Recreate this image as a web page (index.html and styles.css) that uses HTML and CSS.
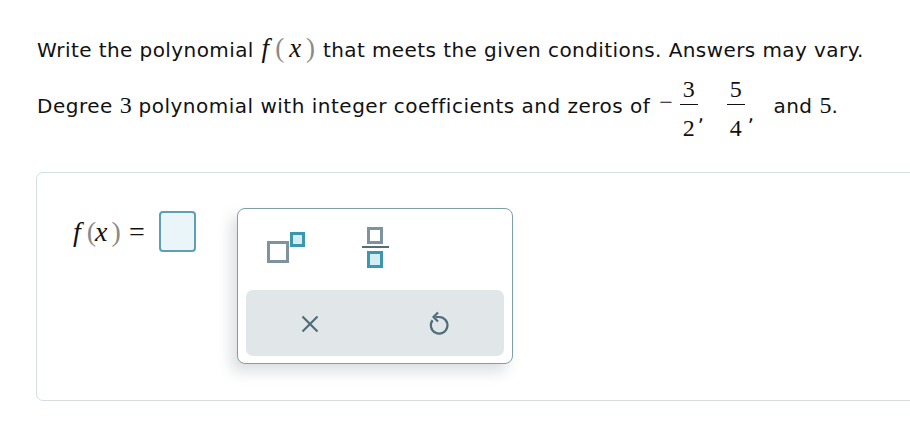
FILE: index.html
```html
<!DOCTYPE html>
<html>
<head>
<meta charset="utf-8">
<link rel="stylesheet" href="styles.css">
</head>
<body>
<div class="page">
  <p class="line1">Write the polynomial <span class="m1 mf">f</span><span class="m1 p1 po">(</span><span class="m1 mx">x</span><span class="m1 p1 pc">)</span> that meets the given conditions. Answers may vary.</p>
  <p class="line2">Degree <span class="mn">3</span> polynomial with integer coefficients and zeros of <span class="minus">−</span><span class="frac"><span class="num">3</span><span class="den">2</span></span><span class="comma">,</span><span class="frac f2"><span class="num">5</span><span class="den">4</span></span><span class="comma c2">,</span> and <span class="mn">5</span>.</p>
  <div class="answer">
    <div class="expr">
      <span class="m2 af">f</span><span class="m2 p2 ao">(</span><span class="m2 ax">x</span><span class="m2 p2 ac">)</span><span class="eq">=</span><span class="box"></span>
    </div>
    <div class="palette">
      <div class="tools">
        <button class="tool sup">
          <svg width="40" height="32" viewBox="0 0 40 32">
            <rect x="1.5" y="10.5" width="19" height="19" fill="#fff" stroke="#7e939c" stroke-width="3"/>
            <rect x="24.5" y="1.5" width="12" height="12" fill="#d3edf4" stroke="#3c97ae" stroke-width="3"/>
          </svg>
        </button>
        <button class="tool fr">
          <svg width="28" height="42" viewBox="0 0 28 42">
            <rect x="6.5" y="1.5" width="13" height="14" fill="#fff" stroke="#7e939c" stroke-width="3"/>
            <rect x="0" y="19" width="27" height="2" fill="#546e78"/>
            <rect x="6.5" y="25.5" width="13" height="14" fill="#d3edf4" stroke="#3c97ae" stroke-width="3"/>
          </svg>
        </button>
      </div>
      <div class="actions">
        <button class="act ax1">
          <svg width="18" height="18" viewBox="0 0 18 18">
            <path d="M1.5 1.5 L16.5 16.5 M16.5 1.5 L1.5 16.5" stroke="#4e6d79" stroke-width="2.2" fill="none"/>
          </svg>
        </button>
        <button class="act ax2">
          <svg width="22" height="26" viewBox="0 0 22 26">
            <path d="M4.6 10.2 A8.3 8.3 0 1 0 11 7 L7.5 7" stroke="#4e6d79" stroke-width="2.2" fill="none"/>
            <path d="M10 2.5 L5.5 7 L10 11.5" stroke="#4e6d79" stroke-width="2.2" fill="none"/>
          </svg>
        </button>
      </div>
    </div>
  </div>
</div>
</body>
</html>
```
FILE: styles.css
```css
html, body {
  margin: 0;
  padding: 0;
  background: #fff;
  overflow: hidden;
}
.page {
  padding: 0 0 0 37px;
  font-family: "DejaVu Sans", Verdana, sans-serif;
  font-size: 20px;
  color: #111;
}
.line1 {
  margin: 0;
  padding-top: 36px;
  line-height: 28px;
  height: 28px;
  white-space: nowrap;
  letter-spacing: 0.42px;
}
.line2 {
  margin: 28px 0 0 0;
  line-height: 28px;
  height: 28px;
  white-space: nowrap;
  letter-spacing: 0.5px;
}
.m1, .m2, .mn, .minus, .frac, .eq {
  font-family: "Liberation Serif", "Times New Roman", serif;
  letter-spacing: 0;
  line-height: 0;
}
.m1 { font-size: 27px; }
.mf, .mx, .af, .ax { font-style: italic; }
.p1, .p2 { color: #8a8a8a; }
.mf { margin-left: 1px; margin-right: 6px; }
.po { margin-right: 5px; }
.mx { margin-right: 5px; }
.pc { margin-right: 1px; }
.mn {
  font-size: 24px;
}
.minus {
  font-size: 24px;
  vertical-align: 3px;
  margin-left: 2px;
  margin-right: 7px;
}
.frac {
  display: inline-block;
  vertical-align: -23px;
  margin: -40px 0;
  font-size: 24px;
  text-align: center;
}
.f2 { margin-left: 22px; }
.num {
  display: block;
  line-height: 22px;
  padding: 0 3px 4px;
  border-bottom: 1.5px solid #111;
}
.den {
  display: block;
  line-height: 22px;
  padding-top: 12.5px;
}
.comma {
  vertical-align: -8px;
}
.c2 { margin-left: 3px; margin-right: 12px; }
.answer {
  margin-top: 52px;
  margin-left: -1px;
  width: 1000px;
  height: 229px;
  border: 1.5px solid #d5dde1;
  border-radius: 7px;
  display: flex;
  align-items: flex-start;
  box-sizing: border-box;
}
.expr {
  display: flex;
  align-items: center;
  margin-left: 36px;
  margin-top: 37.5px;
  height: 41px;
}
.m2 { font-size: 28px; line-height: 41px; }
.af { margin-right: 6px; }
.ao { margin-right: -1px; }
.ax { margin-right: 4px; }
.eq {
  font-size: 28px;
  line-height: 41px;
  margin: 0 14px 0 8px;
}
.box {
  box-sizing: border-box;
  width: 37px;
  height: 41px;
  border: 2px solid #5f9fb3;
  border-radius: 4px;
  background: #eaf5fa;
}
.palette {
  margin-left: 41px;
  margin-top: 34.5px;
  width: 276px;
  height: 156px;
  box-sizing: border-box;
  border: 1.5px solid #809ea8;
  border-radius: 8px;
  background: #fff;
  box-shadow: -6px 8px 14px rgba(60, 80, 90, 0.18);
  padding: 0 8px 7px 8px;
  display: flex;
  flex-direction: column;
}
.tools {
  display: flex;
  align-items: flex-start;
  height: 81px;
}
.tool {
  border: 0;
  background: none;
  padding: 0;
  margin: 0;
  display: flex;
}
.sup {
  margin-left: 21px;
  margin-top: 23px;
}
.fr {
  margin-left: 55px;
  margin-top: 18.5px;
}
.actions {
  height: 66px;
  background: #e1e6e8;
  border-radius: 7px;
  display: flex;
  align-items: center;
}
.act {
  border: 0;
  background: none;
  padding: 0;
  display: flex;
}
.ax1 { margin-left: 55px; margin-top: 2px; }
.ax2 { margin-left: 109px; }
```
